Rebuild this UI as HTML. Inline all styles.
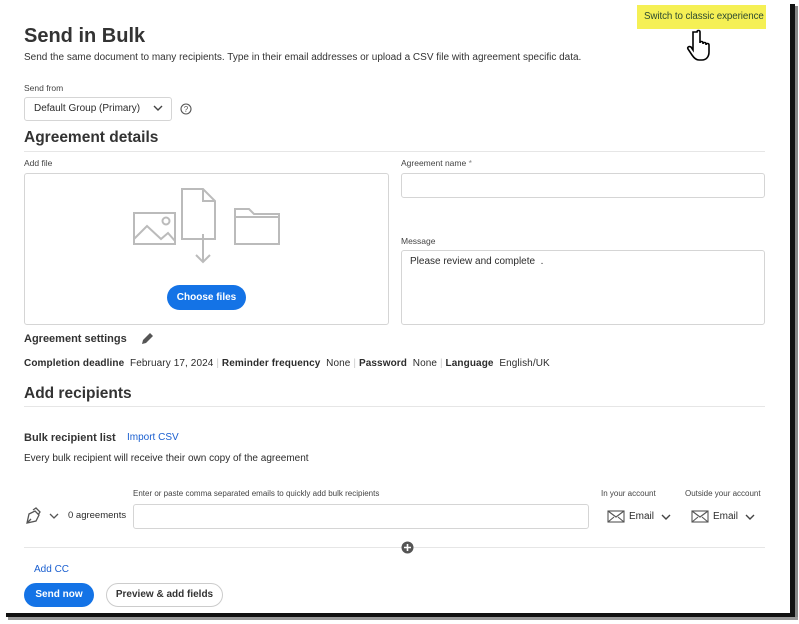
<!DOCTYPE html>
<html><head><meta charset="utf-8"><style>
*{box-sizing:border-box;margin:0;padding:0}
body{width:799px;height:624px;background:#fff;position:relative;overflow:hidden;font-family:"Liberation Sans",sans-serif;color:#2c2c2c}
.a{position:absolute;white-space:nowrap}
.s{font-size:8.5px;color:#444}
.t{font-size:10px}
.box{position:absolute;border:1px solid #d5d5d5;border-radius:3px;background:#fff}
.hr{position:absolute;height:1px;background:#e6e6e6}
.blue{color:#1a5fd0}
</style></head><body>
<div class="a" style="left:790px;top:4px;width:5px;height:613px;background:#111"></div>
<div class="a" style="left:795px;top:6px;width:3px;height:613px;background:#888"></div>
<div class="a" style="left:6px;top:613px;width:789px;height:4px;background:#111"></div>
<div class="a" style="left:8px;top:617px;width:790px;height:3px;background:#999"></div>

<div class="a" style="left:637px;top:5px;width:129px;height:24px;background:#f5f055"></div>
<div class="a" style="left:644px;top:11px;font-size:9.8px;letter-spacing:-0.1px;color:#2b4a30">Switch to classic experience</div>
<svg class="a" style="left:686px;top:28px" width="32" height="36" viewBox="0 0 32 36"><path d="M11 4c0-2 3-2 3 0v11c0-2 3-2 3 0v1c0-2 3-2 3 0v1c0-2 3-2 3 0v7c0 5-3 8-7 8h-3c-3 0-5-2-7-5l-4-6c-1-2 1-3 3-2l2 3V4z" fill="#fff" stroke="#000" stroke-width="1.6"/></svg>

<div class="a" style="left:24px;top:25px;font-size:20px;font-weight:bold;color:#333">Send in Bulk</div>
<div class="a" style="left:24px;top:52px;font-size:10px;color:#333">Send the same document to many recipients. Type in their email addresses or upload a CSV file with agreement specific data.</div>
<div class="a s" style="left:24px;top:83px">Send from</div>
<div class="box" style="left:24px;top:97px;width:148px;height:24px"></div>
<div class="a t" style="left:34px;top:103px">Default Group (Primary)</div>
<svg class="a" style="left:153px;top:104px" width="10" height="8"><path d="M1 2l4 4 4-4" fill="none" stroke="#444" stroke-width="1.4"/></svg>
<svg class="a" style="left:180px;top:103px" width="12" height="12"><circle cx="6" cy="6" r="5" fill="none" stroke="#555" stroke-width="1.1"/><text x="6" y="9" font-size="8" text-anchor="middle" fill="#555" font-family="Liberation Sans">?</text></svg>

<div class="a" style="left:24px;top:129px;font-size:15.5px;font-weight:bold;color:#333">Agreement details</div>
<div class="hr" style="left:24px;top:151px;width:741px"></div>
<div class="a s" style="left:24px;top:158px">Add file</div>
<div class="box" style="left:24px;top:173px;width:365px;height:152px"></div>
<svg class="a" style="left:130px;top:187px" width="152" height="80" fill="none" stroke="#bbb" stroke-width="2"><rect x="4" y="26" width="41" height="31"/><circle cx="36" cy="34" r="3.5"/><path d="M4 52l13-13 14 13 7-6 7 8"/><path d="M52 2h21l12 12v38H52z M73 2v12h12"/><path d="M73 47v28m-7-7l7 7 7-7"/><path d="M105 22h14l5 5h25v30h-44z M105 30h44"/></svg>
<div class="a" style="left:167px;top:285px;width:79px;height:25px;border-radius:13px;background:#1473e6;color:#fff;font-size:10px;font-weight:bold;text-align:center;line-height:25px">Choose files</div>

<div class="a s" style="left:401px;top:158px">Agreement name <span style="color:#888">*</span></div>
<div class="box" style="left:401px;top:173px;width:364px;height:25px"></div>
<div class="a s" style="left:401px;top:236px">Message</div>
<div class="box" style="left:401px;top:250px;width:364px;height:75px"></div>
<div class="a t" style="left:410px;top:256px">Please review and complete &nbsp;.</div>

<div class="a" style="left:24px;top:333px;font-size:11px;font-weight:bold;color:#333">Agreement settings</div>
<svg class="a" style="left:140px;top:332px" width="14" height="14"><path d="M2 12l1-4 7-7 3 3-7 7z" fill="#555"/></svg>
<div class="a" style="left:24px;top:358px;font-size:10px;letter-spacing:0.1px"><b>Completion deadline</b>&nbsp; February 17, 2024 <span style="color:#ccc">|</span> <b>Reminder frequency</b>&nbsp; None <span style="color:#ccc">|</span> <b>Password</b>&nbsp; None <span style="color:#ccc">|</span> <b>Language</b>&nbsp; English/UK</div>

<div class="a" style="left:24px;top:385px;font-size:15.5px;font-weight:bold;color:#333">Add recipients</div>
<div class="hr" style="left:24px;top:406px;width:741px"></div>
<div class="a" style="left:24px;top:432px;font-size:11px;font-weight:bold;color:#333">Bulk recipient list</div>
<div class="a t blue" style="left:127px;top:432px">Import CSV</div>
<div class="a t" style="left:24px;top:453px">Every bulk recipient will receive their own copy of the agreement</div>

<div class="a" style="left:133px;top:489px;font-size:8px;color:#444">Enter or paste comma separated emails to quickly add bulk recipients</div>
<svg class="a" style="left:24px;top:507px" width="38" height="18" fill="none" stroke="#555" stroke-width="1.3"><path d="M3 16l2-9 6-3 4 4-3 6z M3 16l4-4 M9 3l3-2 4 4-2 3"/><path d="M26 7l4 4 4-4"/></svg>
<div class="a" style="left:68px;top:510px;font-size:9.5px">0 agreements</div>
<div class="box" style="left:133px;top:504px;width:456px;height:25px"></div>
<div class="a" style="left:601px;top:489px;font-size:8px;color:#444">In your account</div>
<div class="a" style="left:685px;top:489px;font-size:8px;color:#444">Outside your account</div>
<svg class="a" style="left:607px;top:510px" width="18" height="13" fill="none" stroke="#555" stroke-width="1.1"><rect x="1" y="1" width="16" height="11"/><path d="M1 1l8 6 8-6M1 12l6-5M17 12l-6-5"/></svg>
<div class="a t" style="left:629px;top:511px">Email</div>
<svg class="a" style="left:661px;top:513px" width="10" height="8"><path d="M1 2l4 4 4-4" fill="none" stroke="#444" stroke-width="1.4"/></svg>
<svg class="a" style="left:691px;top:510px" width="18" height="13" fill="none" stroke="#555" stroke-width="1.1"><rect x="1" y="1" width="16" height="11"/><path d="M1 1l8 6 8-6M1 12l6-5M17 12l-6-5"/></svg>
<div class="a t" style="left:713px;top:511px">Email</div>
<svg class="a" style="left:745px;top:513px" width="10" height="8"><path d="M1 2l4 4 4-4" fill="none" stroke="#444" stroke-width="1.4"/></svg>

<div class="hr" style="left:24px;top:547px;width:741px"></div>
<svg class="a" style="left:401px;top:541px" width="13" height="13"><circle cx="6.5" cy="6.5" r="6" fill="#555"/><path d="M6.5 3v7M3 6.5h7" stroke="#fff" stroke-width="1.6"/></svg>
<div class="a t blue" style="left:34px;top:564px">Add CC</div>
<div class="a" style="left:24px;top:583px;width:70px;height:24px;border-radius:12px;background:#1473e6;color:#fff;font-size:10px;font-weight:bold;text-align:center;line-height:24px">Send now</div>
<div class="a" style="left:106px;top:583px;width:117px;height:24px;border-radius:12px;border:1.5px solid #ccc;color:#333;font-size:10px;font-weight:bold;text-align:center;line-height:21px">Preview &amp; add fields</div>
</body></html>
